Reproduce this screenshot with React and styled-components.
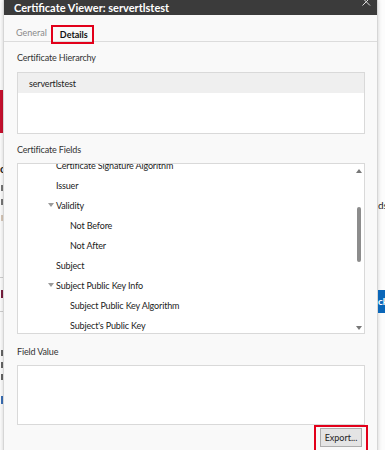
import React from 'react';
import styled, {createGlobalStyle} from "styled-components";

const GlobalStyle = createGlobalStyle`
  html, body {
    margin: 0;
    padding: 0;
    background: #ffffff;
    overflow: hidden;
  }
  * {
    box-sizing: border-box;
  }
`;

const Page = styled.div`
  width: 385px;
  height: 450px;
  display: flex;
  overflow: hidden;
  font-family: Lato, "Open Sans", sans-serif;
  background: #fcfcfc;
`;

const Behind = styled.div`
  width: ${({w}) => w}px;
  flex: none;
  overflow: hidden;
  display: flex;
  flex-direction: column;
  font-size: 11px;
  color: #222;
  white-space: nowrap;
  ${({right}) => right ? "align-items: flex-start;" : "align-items: flex-end;"}
`;

const Blob = styled.div`
  flex: none;
  margin-top: ${({top}) => top}px;
  width: ${({width}) => width}px;
  height: ${({height}) => height}px;
  background: ${({color}) => color};
  color: ${({textColor}) => textColor || "#222"};
  font-size: ${({size}) => size || 10}px;
  font-weight: ${({bold}) => bold ? 700 : 400};
  line-height: ${({height}) => height}px;
  overflow: hidden;
`;

const Dialog = styled.div`
  width: 375px;
  flex: none;
  height: 460px;
  background: #f9f9f9;
  border-left: 1px solid #d6d6d6;
  border-right: 1px solid #d6d6d6;
  box-shadow: 0 0 4px rgba(0,0,0,0.18);
  display: flex;
  flex-direction: column;
`;

const TitleBar = styled.div`
  height: 15px;
  background: #3b3b3b;
  display: flex;
  align-items: flex-end;
  justify-content: space-between;
  padding: 0 6px 1px 10px;
`;

const Title = styled.div`
  color: #ffffff;
  font-weight: 700;
  font-size: 11px;
  line-height: 13px;
`;

const CloseIcon = styled.svg`
  align-self: flex-start;
  margin-top: -2px;
`;

const Tabs = styled.div`
  height: 27px;
  border-bottom: 1px solid #dcdcdc;
  display: flex;
  align-items: flex-end;
  padding-left: 12px;
`;

const Tab = styled.div`
  font-size: 9px;
  line-height: 15px;
  color: ${({active}) => active ? "#111" : "#8a8a8a"};
  font-weight: ${({active}) => active ? 700 : 400};
  padding: ${({active}) => active ? "0 4px 0 7px" : "0"};
  height: ${({active}) => active ? 19 : 17}px;
  margin-bottom: ${({active}) => active ? -3 : 0}px;
  margin-left: ${({active}) => active ? 4 : 0}px;
  border: ${({active}) => active ? "2px solid #e2001a" : "none"};
  display: flex;
  align-items: center;
`;

const Body = styled.div`
  padding: 0 12px 0 13px;
  display: flex;
  flex-direction: column;
  font-size: 9px;
  letter-spacing: -0.15px;
  color: #222;
`;

const Label = styled.div`
  color: #333;
  height: 14px;
  line-height: 14px;
  margin-top: ${({top}) => top}px;
  margin-bottom: ${({bottom}) => bottom}px;
`;

const Box = styled.div`
  height: ${({height}) => height}px;
  background: #ffffff;
  border: 1px solid #d9d9d9;
  position: relative;
  overflow: hidden;
`;

const HierarchyRow = styled.div`
  height: 20px;
  background: #efefef;
  padding-left: 11px;
  display: flex;
  align-items: center;
`;

const FieldList = styled.div`
  margin-top: -9px;
  display: flex;
  flex-direction: column;
`;

const FieldRow = styled.div`
  height: 20px;
  display: flex;
  align-items: center;
  padding-left: ${({level}) => level === 2 ? 52 : 38}px;
  position: relative;
`;

const Caret = styled.span`
  position: absolute;
  left: 30px;
  top: 8px;
  width: 0;
  height: 0;
  border-left: 3px solid transparent;
  border-right: 3px solid transparent;
  border-top: 4px solid #9a9a9a;
`;

const ScrollTrack = styled.div`
  position: absolute;
  right: 0;
  top: 0;
  bottom: 0;
  width: 11px;
  display: flex;
  flex-direction: column;
  align-items: center;
  padding: 5px 0 3px;
`;

const Arrow = styled.span`
  width: 0;
  height: 0;
  border-left: 3px solid transparent;
  border-right: 3px solid transparent;
  ${({down}) => down ? "border-top: 4px solid #777;" : "border-bottom: 4px solid #777;"}
`;

const Thumb = styled.div`
  width: 4px;
  height: 55px;
  border-radius: 2px;
  background: #8c8c8c;
  margin-top: 34px;
  margin-bottom: auto;
`;

const Footer = styled.div`
  display: flex;
  justify-content: flex-end;
  margin-top: 0;
  margin-right: -3px;
`;

const ExportFrame = styled.div`
  border: 2px solid #e2001a;
  padding: 1px 4px 3px 4px;
`;

const ExportButton = styled.button`
  font-family: inherit;
  font-size: 9px;
  color: #222;
  height: 19px;
  width: 42px;
  padding: 0;
  background: #e4e4e4;
  border: 1px solid #adadad;
`;

const fields = [
  {label: "Certificate Signature Algorithm", level: 1},
  {label: "Issuer", level: 1},
  {label: "Validity", level: 1, open: true},
  {label: "Not Before", level: 2},
  {label: "Not After", level: 2},
  {label: "Subject", level: 1},
  {label: "Subject Public Key Info", level: 1, open: true},
  {label: "Subject Public Key Algorithm", level: 2},
  {label: "Subject's Public Key", level: 2},
];

const App = () => {
  return (
    <Page>
      <GlobalStyle />
      <Behind w={3}>
        <Blob top={90} width={3} height={43} color="#c8102e" />
        <Blob top={31} width={3} height={9} color="transparent" bold size={11}>o</Blob>
        <Blob top={12} width={2} height={6} color="#777" />
        <Blob top={8} width={2} height={6} color="#777" />
        <Blob top={10} width={2} height={6} color="#d8c8b8" />
        <Blob top={56} width={3} height={1} color="#cfcfcf" />
        <Blob top={12} width={2} height={8} color="#7a2040" />
        <Blob top={13} width={3} height={1} color="#cfcfcf" />
        <Blob top={38} width={2} height={6} color="#666" />
        <Blob top={6} width={2} height={6} color="#666" />
        <Blob top={6} width={2} height={6} color="#666" />
        <Blob top={16} width={2} height={8} color="#3b6fb5" />
      </Behind>
      <Dialog>
        <TitleBar>
          <Title>Certificate Viewer: servertlstest</Title>
          <CloseIcon width="9" height="8" viewBox="0 0 9 8">
            <path d="M0.5 0 L8 7.5 M8 0 L0.5 7.5" stroke="#e0e0e0" strokeWidth="1" />
          </CloseIcon>
        </TitleBar>
        <Tabs>
          <Tab>General</Tab>
          <Tab active>Details</Tab>
        </Tabs>
        <Body>
          <Label top={9} bottom={7}>Certificate Hierarchy</Label>
          <Box height={62}>
            <HierarchyRow>servertlstest</HierarchyRow>
          </Box>
          <Label top={9} bottom={6}>Certificate Fields</Label>
          <Box height={171}>
            <FieldList>
              {fields.map((item, index) => (
                <FieldRow key={index} level={item.level}>
                  {item.open && <Caret />}
                  {item.label}
                </FieldRow>
              ))}
            </FieldList>
            <ScrollTrack>
              <Arrow />
              <Thumb />
              <Arrow down />
            </ScrollTrack>
          </Box>
          <Label top={11} bottom={6}>Field Value</Label>
          <Box height={60} />
          <Footer>
            <ExportFrame>
              <ExportButton>Export...</ExportButton>
            </ExportFrame>
          </Footer>
        </Body>
      </Dialog>
      <Behind w={7} right>
        <Blob top={200} width={7} height={11} color="transparent" size={10}>ds</Blob>
        <Blob top={79} width={7} height={23} color="#0a66b8" textColor="#fff" size={10} bold>ck</Blob>
      </Behind>
    </Page>
  );
};

export default App;
